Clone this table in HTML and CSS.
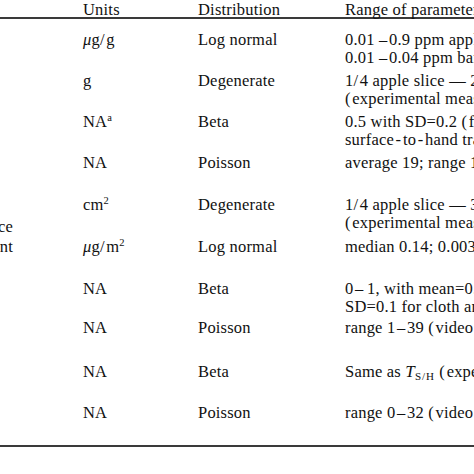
FILE: index.html
```html
<!DOCTYPE html>
<html>
<head>
<meta charset="utf-8">
<link rel="stylesheet" href="styles.css">
</head>
<body>
<div class="table">
  <div class="head">
    <div class="c0"></div>
    <div class="c">Units</div>
    <div class="c">Distribution</div>
    <div class="c">Range of parameters</div>
  </div>
  <div class="body">
    <div class="c0"></div>
    <div class="c"><i>μ</i>g/&#8202;g</div>
    <div class="c">Log normal</div>
    <div class="c">0.01 –&#8202;0.9 ppm apple<br>0.01 –&#8202;0.04 ppm banana</div>

    <div class="c0"></div>
    <div class="c">g</div>
    <div class="c">Degenerate</div>
    <div class="c">1/&#8202;4 apple slice — 20 g<br>(&#8202;experimental measurement)</div>

    <div class="c0"></div>
    <div class="c">NA<sup>a</sup></div>
    <div class="c">Beta</div>
    <div class="c">0.5 with SD=0.2 (&#8202;fraction of<br>surface&#8202;-&#8202;to&#8202;-&#8202;hand transfer)</div>

    <div class="c0"></div>
    <div class="c">NA</div>
    <div class="c">Poisson</div>
    <div class="c">average 19; range 1–45</div>

    <div class="c0 lab"><span>Surface</span><span>amount</span></div>
    <div class="c">cm<sup>2</sup></div>
    <div class="c">Degenerate</div>
    <div class="c">1/&#8202;4 apple slice — 30 cm<sup>2</sup><br>(&#8202;experimental measurement)</div>

    <div class="c0"></div>
    <div class="c"><i>μ</i>g/&#8202;m<sup>2</sup></div>
    <div class="c">Log normal</div>
    <div class="c">median 0.14; 0.003–7.6</div>

    <div class="c0"></div>
    <div class="c">NA</div>
    <div class="c">Beta</div>
    <div class="c">0&#8202;–&#8201;1, with mean=0.5<br>SD=0.1 for cloth and</div>

    <div class="c0"></div>
    <div class="c">NA</div>
    <div class="c">Poisson</div>
    <div class="c">range 1&#8202;–&#8202;39 (&#8202;video data)</div>

    <div class="c0"></div>
    <div class="c">NA</div>
    <div class="c">Beta</div>
    <div class="c">Same as <i class="t">T</i><sub>S/H</sub> (&#8202;experimental)</div>

    <div class="c0"></div>
    <div class="c">NA</div>
    <div class="c">Poisson</div>
    <div class="c">range 0&#8202;–&#8202;32 (&#8202;video data)</div>
  </div>
</div>
</body>
</html>
```
FILE: styles.css
```css
html, body {
  margin: 0;
  padding: 0;
  background: #fff;
  overflow: hidden;
  width: 474px;
  height: 474px;
}
.table {
  font-family: "Liberation Serif", "Times New Roman", serif;
  font-size: 16.5px;
  letter-spacing: 0.2px;
  line-height: 18px;
  color: #111;
  width: 474px;
}
.head, .body {
  display: grid;
  grid-template-columns: 83px 115px 147px 129px;
}
.head {
  height: 19px;
  padding-top: 1px;
  box-sizing: border-box;
  border-bottom: 2px solid #3a3a3a;
}
.body {
  padding-top: 12px;
  grid-template-rows: 41px 41px 41px 42px 42px 42px 39px 44px 41px 41px;
  border-bottom: 2px solid #3a3a3a;
}
.c {
  white-space: nowrap;
}
.c0 {
  position: relative;
}
.lab {
  display: flex;
  flex-direction: column;
  align-items: flex-end;
  width: 13px;
  padding-top: 21px;
  line-height: 20px;
  white-space: nowrap;
}
sup {
  font-size: 10.5px;
  line-height: 0;
  vertical-align: 6px;
}
sub {
  font-size: 11px;
  line-height: 0;
  vertical-align: -3px;
  letter-spacing: 1px;
}
.t {
  font-size: 17px;
}
```
